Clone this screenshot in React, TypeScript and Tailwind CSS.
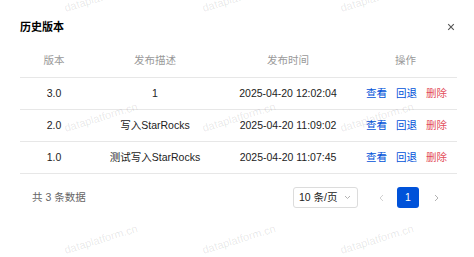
import React from "react";

const rows = [
  { v: "3.0", d: "1", t: "2025-04-20 12:02:04" },
  { v: "2.0", d: "写入StarRocks", t: "2025-04-20 11:09:02" },
  { v: "1.0", d: "测试写入StarRocks", t: "2025-04-20 11:07:45" },
];

const marks: { x: number; y: number }[] = [];
for (const y of [-4, 116, 238]) {
  for (const x of [-35, 103, 241, 379, 517]) marks.push({ x, y });
}

export default function App() {
  const font = { fontFamily: '"Liberation Sans", "Noto Sans CJK SC", sans-serif' };
  return (
    <div className="relative w-[474px] h-[257px] overflow-hidden bg-white text-[#222]" style={font}>
      <div className="flex items-center justify-between pl-[20px] pr-[18px] pt-[20px]">
        <div className="text-[11px] leading-[14px] font-bold text-black">历史版本</div>
        <svg width="10" height="10" viewBox="0 0 10 10" className="text-[#555]">
          <path d="M2.2 2.2L7.8 7.8M7.8 2.2L2.2 7.8" stroke="currentColor" strokeWidth="1.1" />
        </svg>
      </div>

      <div className="ml-[20px] w-[437px] mt-[11px] text-[10.5px]">
        <div className="flex h-[33px] items-center border-b border-[#e7e7e7] text-[#999]">
          <div className="w-[68px] text-center">版本</div>
          <div className="w-[134px] text-center">发布描述</div>
          <div className="w-[132px] text-center">发布时间</div>
          <div className="flex-1 text-center">操作</div>
        </div>
        {rows.map((r) => (
          <div key={r.v} className="flex h-[32px] items-center border-b border-[#e7e7e7]">
            <div className="w-[68px] text-center">{r.v}</div>
            <div className="w-[134px] text-center">{r.d}</div>
            <div className="w-[132px] text-center">{r.t}</div>
            <div className="flex-1 flex justify-center gap-[9px] pl-[2px]">
              <span className="text-[#0052d9]">查看</span>
              <span className="text-[#0052d9]">回退</span>
              <span className="text-[#e34d59]">删除</span>
            </div>
          </div>
        ))}
        <div className="flex items-center justify-between pl-[12px] pr-[10px] pt-[13px]">
          <div className="text-[#666]">共 3 条数据</div>
          <div className="flex items-center">
            <div className="flex h-[21px] w-[65px] items-center justify-between rounded-[3px] border border-[#dcdcdc] pl-[5px] pr-[6px] text-[#222]">
              <span>10 条/页</span>
              <svg width="7" height="5" viewBox="0 0 7 5">
                <path d="M1 1L3.5 3.5L6 1" stroke="#aaa" strokeWidth="0.9" fill="none" />
              </svg>
            </div>
            <div className="ml-[12px] flex h-[21px] w-[22px] items-center justify-center">
              <svg width="5" height="8" viewBox="0 0 5 8">
                <path d="M4 1L1 4L4 7" stroke="#ccc" strokeWidth="0.9" fill="none" />
              </svg>
            </div>
            <div className="ml-[5px] flex h-[21px] w-[22px] items-center justify-center rounded-[3px] bg-[#0052d9] text-white">1</div>
            <div className="ml-[6px] flex h-[21px] w-[22px] items-center justify-center">
              <svg width="5" height="8" viewBox="0 0 5 8">
                <path d="M1 1L4 4L1 7" stroke="#aaa" strokeWidth="0.9" fill="none" />
              </svg>
            </div>
          </div>
        </div>
      </div>

      <div className="pointer-events-none absolute inset-0">
        {marks.map((m, i) => (
          <div
            key={i}
            className="absolute text-[11px] whitespace-nowrap text-black/[0.1]"
            style={{ left: m.x - 40, top: m.y - 7, transform: "rotate(-17deg)" }}
          >
            dataplatform.cn
          </div>
        ))}
      </div>
    </div>
  );
}
